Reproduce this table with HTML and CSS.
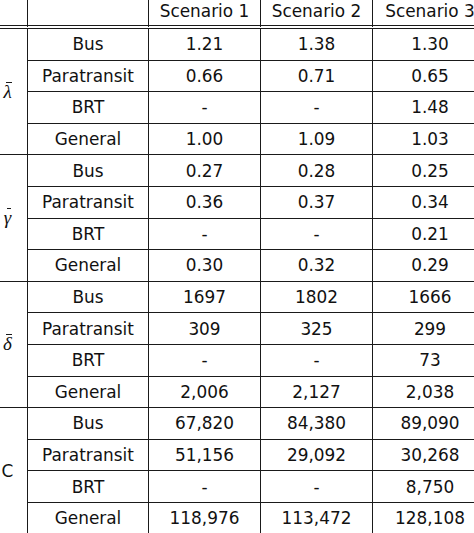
FILE: index.html
```html
<!DOCTYPE html>
<html>
<head>
<meta charset="utf-8">
<link rel="stylesheet" href="styles.css">
</head>
<body>
<table class="grid">
  <colgroup>
    <col class="c0"><col class="c1"><col class="c2"><col class="c3"><col class="c4">
  </colgroup>
  <thead>
    <tr class="head">
      <th></th><th></th><th>Scenario 1</th><th>Scenario 2</th><th>Scenario 3</th>
    </tr>
  </thead>
  <tbody>
    <tr><td class="sym" rowspan="4"><span class="bar">λ</span></td><td>Bus</td><td>1.21</td><td>1.38</td><td>1.30</td></tr>
    <tr><td>Paratransit</td><td>0.66</td><td>0.71</td><td>0.65</td></tr>
    <tr><td>BRT</td><td>-</td><td>-</td><td>1.48</td></tr>
    <tr class="last"><td>General</td><td>1.00</td><td>1.09</td><td>1.03</td></tr>

    <tr><td class="sym" rowspan="4"><span class="bar">γ</span></td><td>Bus</td><td>0.27</td><td>0.28</td><td>0.25</td></tr>
    <tr><td>Paratransit</td><td>0.36</td><td>0.37</td><td>0.34</td></tr>
    <tr><td>BRT</td><td>-</td><td>-</td><td>0.21</td></tr>
    <tr class="last"><td>General</td><td>0.30</td><td>0.32</td><td>0.29</td></tr>

    <tr><td class="sym" rowspan="4"><span class="bar">δ</span></td><td>Bus</td><td>1697</td><td>1802</td><td>1666</td></tr>
    <tr><td>Paratransit</td><td>309</td><td>325</td><td>299</td></tr>
    <tr><td>BRT</td><td>-</td><td>-</td><td>73</td></tr>
    <tr class="last"><td>General</td><td>2,006</td><td>2,127</td><td>2,038</td></tr>

    <tr><td class="sym plain" rowspan="4">C</td><td>Bus</td><td>67,820</td><td>84,380</td><td>89,090</td></tr>
    <tr><td>Paratransit</td><td>51,156</td><td>29,092</td><td>30,268</td></tr>
    <tr><td>BRT</td><td>-</td><td>-</td><td>8,750</td></tr>
    <tr class="last"><td>General</td><td>118,976</td><td>113,472</td><td>128,108</td></tr>
  </tbody>
</table>
</body>
</html>
```
FILE: styles.css
```css
html, body {
  margin: 0;
  padding: 0;
  background: #ffffff;
  overflow: hidden;
}
body {
  width: 474px;
  height: 533px;
}
.grid {
  margin-left: -12px;
  margin-top: -4px;
  border-collapse: separate;
  border-spacing: 0;
  table-layout: fixed;
  width: 500px;
  font-family: "DejaVu Sans", sans-serif;
  font-size: 16.9px;
  color: #111111;
}
.c0 { width: 40px; }
.c1 { width: 121px; }
.c2 { width: 112px; }
.c3 { width: 112px; }
.c4 { width: 115px; }
.grid th, .grid td {
  padding: 0;
  text-align: center;
  vertical-align: middle;
  font-weight: normal;
  border-right: 1.6px solid #1a1a1a;
  border-bottom: 1.6px solid #1a1a1a;
  height: 30.1px;
  white-space: nowrap;
  box-sizing: border-box;
}
.grid .head th {
  border-bottom: 4.5px double #1a1a1a;
  height: 33px;
}
.grid td {
  height: 31.6px;
}
.sym {
  font-family: "Liberation Serif", serif;
  font-style: italic;
  font-size: 19px;
}
.sym.plain {
  font-family: "DejaVu Sans", sans-serif;
  font-style: normal;
  font-size: 16.9px;
}
.bar {
  position: relative;
  display: inline-block;
}
.bar::before {
  content: "";
  position: absolute;
  left: 3px;
  right: 0px;
  top: 1px;
  border-top: 1px solid #1a1a1a;
}
```
